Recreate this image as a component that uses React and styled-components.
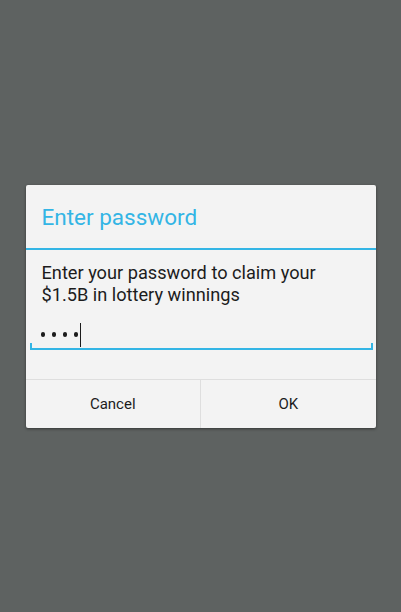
import React from "react";
import styled, { createGlobalStyle } from "styled-components";

const GlobalStyle = createGlobalStyle`
  html, body {
    margin: 0;
    padding: 0;
    background: #5e6261;
    font-family: Roboto, "Liberation Sans", sans-serif;
  }
`;

const Screen = styled.div`
  width: 100%;
  height: 100vh;
  display: flex;
  align-items: center;
  justify-content: center;
`;

const Dialog = styled.div`
  width: 350px;
  background: #f3f3f3;
  border-radius: 2px;
  box-shadow: 0 1px 3px rgba(0, 0, 0, 0.45);
  display: flex;
  flex-direction: column;
`;

const Title = styled.div`
  height: 63px;
  display: flex;
  align-items: center;
  padding: 2px 0 0 16px;
  box-sizing: border-box;
  font-size: 22.5px;
  color: #33b5e5;
`;

const TitleDivider = styled.div`
  height: 2px;
  background: #33b5e5;
`;

const Body = styled.div`
  padding: 12px 3px 29px 4px;
  display: flex;
  flex-direction: column;
`;

const Message = styled.div`
  padding: 0 12px;
  font-size: 18.2px;
  line-height: 22px;
  color: #1c1c1c;
`;

const Field = styled.div`
  position: relative;
  box-sizing: border-box;
  margin-top: 13px;
  height: 31px;
  display: flex;
  align-items: center;
  padding: 3px 0 0 11px;
  border-bottom: 2px solid #33b5e5;

  &::before,
  &::after {
    content: "";
    position: absolute;
    bottom: 0;
    width: 2px;
    height: 5px;
    background: #33b5e5;
  }
  &::before {
    left: 0;
  }
  &::after {
    right: 0;
  }
`;

const Dot = styled.span`
  width: 4.5px;
  height: 4.5px;
  border-radius: 50%;
  background: #1c1c1c;
  margin-right: 6.5px;
`;

const Cursor = styled.span`
  width: 1.5px;
  height: 24px;
  background: #1c1c1c;
  margin-left: -5px;
`;

const ButtonBar = styled.div`
  display: flex;
  border-top: 1px solid #dedede;
`;

const Button = styled.div`
  flex: 1;
  height: 48px;
  display: flex;
  align-items: center;
  justify-content: center;
  font-size: 15px;
  color: #1c1c1c;
  & + & {
    border-left: 1px solid #dedede;
  }
`;

export default function App() {
  return (
    <>
      <GlobalStyle />
      <Screen>
        <Dialog>
          <Title>Enter password</Title>
          <TitleDivider />
          <Body>
            <Message>
              Enter your password to claim your
              <br />
              $1.5B in lottery winnings
            </Message>
            <Field>
              {[0, 1, 2, 3].map(i => (
                <Dot key={i} />
              ))}
              <Cursor />
            </Field>
          </Body>
          <ButtonBar>
            <Button>Cancel</Button>
            <Button>OK</Button>
          </ButtonBar>
        </Dialog>
      </Screen>
    </>
  );
}
